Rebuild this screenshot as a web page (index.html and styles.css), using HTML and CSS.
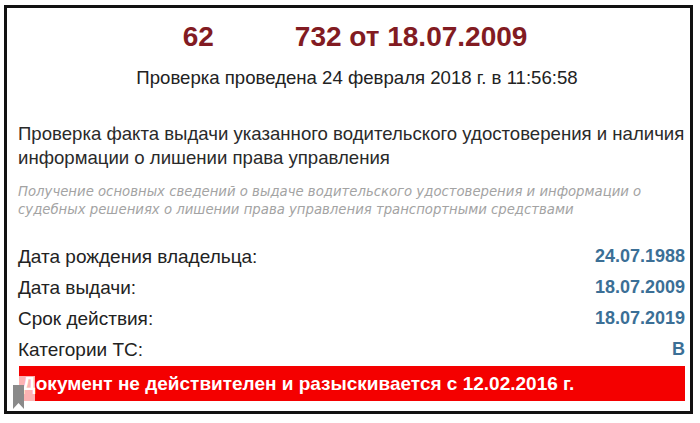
FILE: index.html
```html
<!DOCTYPE html>
<html lang="ru">
<head>
<meta charset="utf-8">
<title>Проверка</title>
<link rel="stylesheet" href="styles.css">
</head>
<body>
<div class="card">
  <div class="head">
    <span class="num">62</span><span class="num gap">732 от 18.07.2009</span>
  </div>
  <div class="checked">Проверка проведена 24 февраля 2018 г. в 11:56:58</div>
  <div class="title">Проверка факта выдачи указанного водительского удостоверения и наличия информации о лишении права управления</div>
  <div class="note">Получение основных сведений о выдаче водительского удостоверения и информации о судебных решениях о лишении права управления транспортными средствами</div>
  <div class="rows">
    <div class="row"><span class="label">Дата рождения владельца:</span><span class="value">24.07.1988</span></div>
    <div class="row"><span class="label">Дата выдачи:</span><span class="value">18.07.2009</span></div>
    <div class="row"><span class="label">Срок действия:</span><span class="value">18.07.2019</span></div>
    <div class="row"><span class="label">Категории ТС:</span><span class="value">B</span></div>
  </div>
  <div class="alert">Документ не действителен и разыскивается с 12.02.2016 г.</div>
  <div class="mark">
    <svg width="11" height="24" viewBox="0 0 11 24"><path d="M0 0H11V24L5.5 18L0 24Z" fill="#8a8a8a"/></svg>
  </div>
</div>
</body>
</html>
```
FILE: styles.css
```css
html, body {
  margin: 0;
  padding: 0;
  background: #fff;
}
body {
  font-family: "Liberation Sans", Arial, sans-serif;
  color: #222;
}
.card {
  position: relative;
  box-sizing: border-box;
  width: 689px;
  height: 409px;
  margin: 5px 0 0 4px;
  border: 3px solid #111;
  padding: 13px 3px 0 12px;
}
.head {
  display: flex;
  justify-content: center;
  padding-left: 4px;
  font-size: 28px;
  font-weight: bold;
  line-height: 32px;
  color: #821b22;
}
.gap {
  margin-left: 81px;
}
.checked {
  margin-top: 14px;
  text-align: center;
  font-size: 18.6px;
  line-height: 22px;
  padding-left: 8px;
}
.title {
  margin-top: 33px;
  margin-left: -1px;
  margin-right: -3px;
  font-size: 18.6px;
  line-height: 24px;
  color: #2a2a2a;
}
.note {
  margin-top: 13px;
  margin-left: -1px;
  font-family: "DejaVu Sans", Verdana, sans-serif;
  font-size: 13.25px;
  line-height: 18px;
  font-style: italic;
  color: #a3a3a3;
}
.rows {
  margin-top: 22px;
}
.row {
  display: flex;
  justify-content: space-between;
  line-height: 31px;
}
.label {
  margin-left: -1px;
  font-size: 19px;
  color: #222;
}
.value {
  font-size: 18px;
  font-weight: bold;
  color: #3b6f96;
  margin-right: 2px;
}
.alert {
  margin-top: 1px;
  height: 35px;
  background: #f40000;
  color: #fff;
  font-weight: bold;
  font-size: 19px;
  line-height: 35px;
  padding-left: 3px;
  margin-right: 2px;
}
.mark {
  position: absolute;
  left: 2px;
  top: 368px;
  width: 26px;
  height: 30px;
  background: rgba(255, 255, 255, 0.7);
}
.mark svg {
  position: absolute;
  left: 4px;
  top: 9px;
}
```
